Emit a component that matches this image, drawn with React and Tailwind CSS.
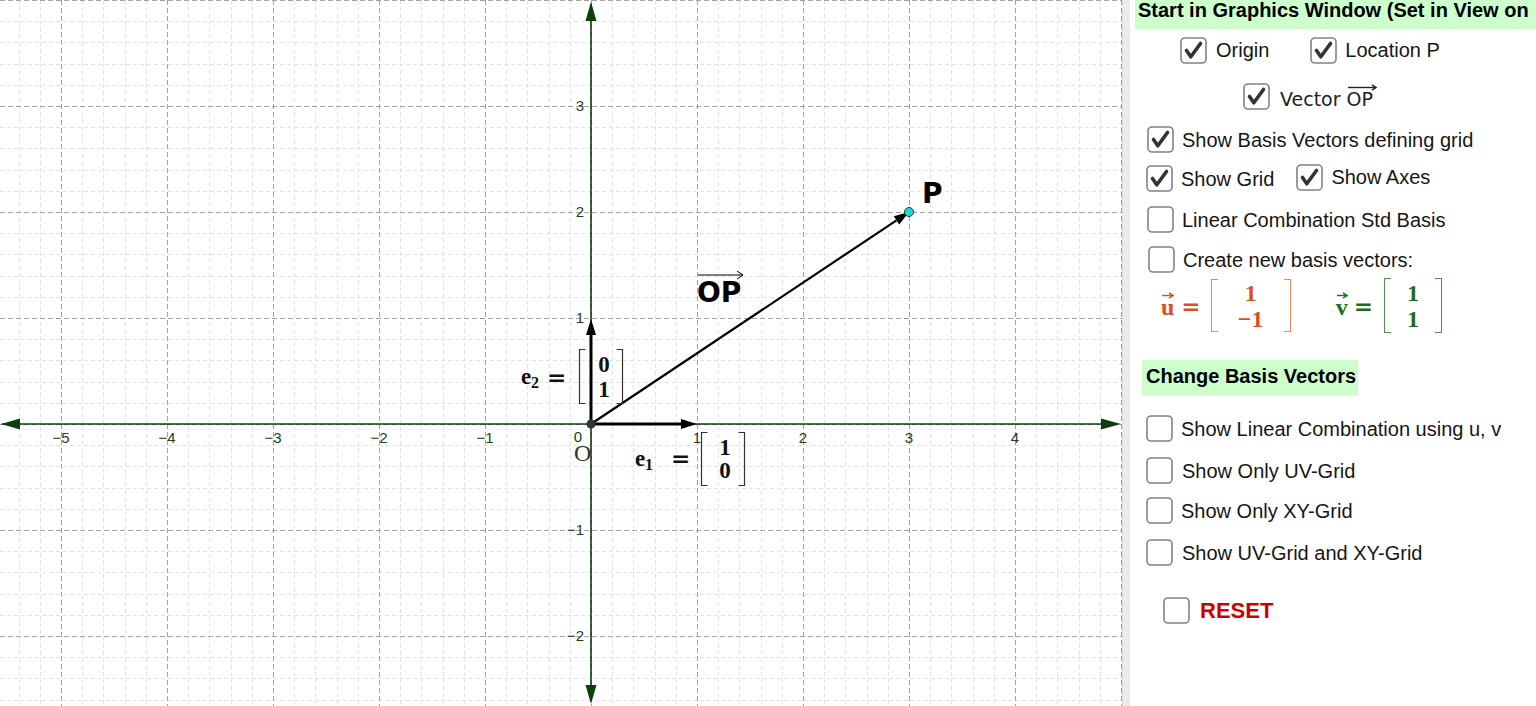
import React from "react";

const U = 106;
const OX = 591;
const OY = 424;
const W = 1122;
const H = 706;
const AXIS = "#0d3f0d";
const LBL = "#1c3f1c";
const SANS = "'Liberation Sans', Arial, sans-serif";
const SERIF = "'Liberation Serif', 'Times New Roman', serif";

function head(tx, ty, dx, dy, len, hw) {
  const l = Math.hypot(dx, dy);
  const ux = dx / l;
  const uy = dy / l;
  const bx = tx - ux * len;
  const by = ty - uy * len;
  const px = -uy;
  const py = ux;
  return {
    pts: `${tx},${ty} ${bx + px * hw},${by + py * hw} ${bx - px * hw},${by - py * hw}`,
    bx,
    by,
  };
}

function Graph() {
  const minorV = [];
  const majorV = [];
  for (let k = -27; k <= 25; k++) {
    const x = Math.round(OX + (k * U) / 5) + 0.5;
    if (k % 5 === 0) {
      majorV.push(<line key={"mv" + k} x1={x} y1={0} x2={x} y2={H} stroke="#a2a2a2" strokeWidth="1" strokeDasharray="5 3" />);
    } else {
      minorV.push(<line key={"nv" + k} x1={x} y1={0} x2={x} y2={H} stroke="#e2e2e2" strokeWidth="1" strokeDasharray="4 3" />);
    }
  }
  const minorH = [];
  const majorH = [];
  for (let k = -20; k <= 13; k++) {
    const y = Math.round(OY + (k * U) / 5) + 0.5;
    if (k % 5 === 0) {
      majorH.push(<line key={"mh" + k} x1={0} y1={y} x2={W} y2={y} stroke="#a2a2a2" strokeWidth="1" strokeDasharray="5 3" />);
    } else {
      minorH.push(<line key={"nh" + k} x1={0} y1={y} x2={W} y2={y} stroke="#e2e2e2" strokeWidth="1" strokeDasharray="4 3" />);
    }
  }
  const xl = [-5, -4, -3, -2, -1, 1, 2, 3, 4];
  const yl = [3, 2, 1, -1, -2];
  const fmt = (n) => (n < 0 ? "\u2212" + Math.abs(n) : String(n));

  const P = { x: OX + 3 * U, y: OY - 2 * U };
  const op = head(P.x, P.y, P.x - OX, P.y - OY, 15, 5);
  const e1 = head(OX + U, OY, 1, 0, 16, 5);
  const e2 = head(OX, OY - U + 1, 0, -1, 16, 5);

  return (
    <svg width={W} height={H} viewBox={`0 0 ${W} ${H}`} className="block shrink-0">
      <rect x="0" y="0" width={W} height={H} fill="#ffffff" />
      {minorV}
      {minorH}
      {majorV}
      {majorH}
      {/* axes */}
      <line x1={2} y1={OY} x2={1104} y2={OY} stroke={AXIS} strokeWidth="1.6" />
      <line x1={OX} y1={4} x2={OX} y2={700} stroke={AXIS} strokeWidth="1.6" />
      <polygon points={`1121,${OY} 1101,${OY - 5.5} 1101,${OY + 5.5}`} fill={AXIS} />
      <polygon points={`1,${OY} 20,${OY - 5.5} 20,${OY + 5.5}`} fill={AXIS} />
      <polygon points={`${OX},2 ${OX - 5.5},21 ${OX + 5.5},21`} fill={AXIS} />
      <polygon points={`${OX},704 ${OX - 5.5},685 ${OX + 5.5},685`} fill={AXIS} />
      {/* tick labels */}
      {xl.map((k) => (
        <text key={"xl" + k} x={OX + k * U} y={443} textAnchor="middle" fontSize="15" fill={LBL} fontFamily={SANS}>
          {fmt(k)}
        </text>
      ))}
      <text x={578} y={442} textAnchor="middle" fontSize="15" fill={LBL} fontFamily={SANS}>0</text>
      {yl.map((k) => (
        <text key={"yl" + k} x={584} y={OY - k * U + 5} textAnchor="end" fontSize="15" fill={LBL} fontFamily={SANS}>
          {fmt(k)}
        </text>
      ))}
      {/* vector OP */}
      <line x1={OX} y1={OY} x2={op.bx} y2={op.by} stroke="#000" strokeWidth="2.2" />
      <polygon points={op.pts} fill="#000" />
      {/* e1, e2 */}
      <line x1={OX} y1={OY} x2={e1.bx} y2={e1.by} stroke="#000" strokeWidth="3" />
      <polygon points={e1.pts} fill="#000" />
      <line x1={OX} y1={OY} x2={e2.bx} y2={e2.by} stroke="#000" strokeWidth="3" />
      <polygon points={e2.pts} fill="#000" />
      {/* points */}
      <circle cx={OX} cy={OY} r="4.5" fill="#333" />
      <circle cx={P.x} cy={P.y} r="4.5" fill="#19d9d9" stroke="#1a4040" strokeWidth="1" />
      {/* labels */}
      <text x={922} y={203} fontSize="28" fontWeight="bold" fill="#000" fontFamily="'DejaVu Sans', sans-serif">P</text>
      <text x={697} y={302} fontSize="28" fontWeight="bold" fill="#000" fontFamily="'DejaVu Sans', sans-serif">OP</text>
      <line x1={698} y1={275} x2={743} y2={275} stroke="#000" strokeWidth="1" />
      <polyline points="737,271 743,275 737,279" fill="none" stroke="#000" strokeWidth="1" />
      <text x={574} y={461} fontSize="24" fill="#333" fontFamily={SERIF}>O</text>
      {/* e2 = [0;1] */}
      <text x={521} y={384} fontSize="23" fontWeight="bold" fill="#111" fontFamily={SERIF}>e</text>
      <text x={531} y={388} fontSize="16" fontWeight="bold" fill="#111" fontFamily={SERIF}>2</text>
      <text x={547} y={385} fontSize="23" fontWeight="bold" fill="#111" fontFamily="'DejaVu Serif', serif">=</text>
      <polyline points="585.5,349.5 579.5,349.5 579.5,403.5 585.5,403.5" fill="none" stroke="#333" strokeWidth="1.2" />
      <text x={604} y={372} textAnchor="middle" fontSize="23" fontWeight="bold" fill="#111" fontFamily={SERIF}>0</text>
      <text x={604} y={397} textAnchor="middle" fontSize="23" fontWeight="bold" fill="#111" fontFamily={SERIF}>1</text>
      <polyline points="616.5,349.5 622.5,349.5 622.5,403.5 616.5,403.5" fill="none" stroke="#333" strokeWidth="1.2" />
      {/* e1 = [1;0] */}
      <text x={635} y={466} fontSize="23" fontWeight="bold" fill="#111" fontFamily={SERIF}>e</text>
      <text x={645} y={470} fontSize="16" fontWeight="bold" fill="#111" fontFamily={SERIF}>1</text>
      <text x={671} y={466} fontSize="23" fontWeight="bold" fill="#111" fontFamily="'DejaVu Serif', serif">=</text>
      <polyline points="707.5,432.5 701.5,432.5 701.5,485.5 707.5,485.5" fill="none" stroke="#333" strokeWidth="1.2" />
      <text x={725} y={455} textAnchor="middle" fontSize="23" fontWeight="bold" fill="#111" fontFamily={SERIF}>1</text>
      <text x={725} y={478} textAnchor="middle" fontSize="23" fontWeight="bold" fill="#111" fontFamily={SERIF}>0</text>
      <polyline points="738.5,432.5 744.5,432.5 744.5,485.5 738.5,485.5" fill="none" stroke="#333" strokeWidth="1.2" />
    </svg>
  );
}

function Box({ checked }) {
  return (
    <svg width="27" height="27" viewBox="0 0 27 27" className="shrink-0 block">
      <rect x="1" y="1" width="25" height="25" rx="4" fill="#fff" stroke="#828282" strokeWidth="1.6" />
      {checked && (
        <path d="M6.5 13.5 L10.8 19.8 L20.5 6.5" fill="none" stroke="#333" strokeWidth="3.6" strokeLinecap="round" strokeLinejoin="round" />
      )}
    </svg>
  );
}

function ArrowOver({ color, w }) {
  return (
    <svg width={w} height="7" viewBox={`0 0 ${w} 7`} className="absolute left-0 top-[0px]">
      <line x1="1" y1="3.5" x2={w - 1} y2="3.5" stroke={color} strokeWidth="1.4" />
      <polyline points={`${w - 5},0.8 ${w - 1},3.5 ${w - 5},6.2`} fill="none" stroke={color} strokeWidth="1.4" />
    </svg>
  );
}

export default function App() {
  return (
    <div className="flex w-[1536px] h-[706px] overflow-hidden bg-white">
      <Graph />
      <div className="w-[8px] shrink-0 bg-[#ebebeb] border-l border-[#dcdcdc]" />
      <div className="flex-1 flex flex-col overflow-hidden bg-white text-[20px] text-[#161616] font-['Liberation_Sans',Arial,sans-serif]">
        {/* header */}
        <div className="ml-[5px] h-[29px] shrink-0 bg-[#ccffcc] pl-[3px] font-bold leading-[20px] whitespace-nowrap text-black">
          Start in Graphics Window (Set in View on
        </div>
        {/* origin / location P */}
        <div className="mt-[7px] ml-[50px] h-[28px] flex items-center whitespace-nowrap leading-[23px]">
          <Box checked />
          <span className="ml-[9px]">Origin</span>
          <span className="ml-[41px]"><Box checked /></span>
          <span className="ml-[8px]">Location P</span>
        </div>
        {/* vector OP */}
        <div className="mt-[18px] ml-[113px] h-[28px] flex items-center whitespace-nowrap font-['DejaVu_Sans',sans-serif] text-[19px] text-[#222]">
          <Box checked />
          <span className="ml-[10px] pt-[5px] leading-[22px]">
            Vector{" "}
            <span className="relative inline-block pt-[4px] -mt-[4px]">
              OP
              <ArrowOver color="#222" w={30} />
            </span>
          </span>
        </div>
        {/* show basis vectors */}
        <div className="mt-[16px] ml-[17px] h-[27px] flex items-center whitespace-nowrap">
          <Box checked />
          <span className="ml-[8px]">Show Basis Vectors defining grid</span>
        </div>
        {/* show grid / axes */}
        <div className="mt-[12px] ml-[16px] h-[27px] flex items-center whitespace-nowrap">
          <Box checked />
          <span className="ml-[8px]">Show Grid</span>
          <span className="ml-[22px] -mt-[3px]"><Box checked /></span>
          <span className="ml-[8px] -mt-[3px]">Show Axes</span>
        </div>
        <div className="mt-[14px] ml-[17px] h-[27px] flex items-center whitespace-nowrap">
          <Box />
          <span className="ml-[8px]">Linear Combination Std Basis</span>
        </div>
        <div className="mt-[13px] ml-[18px] h-[27px] flex items-center whitespace-nowrap">
          <Box />
          <span className="ml-[8px]">Create new basis vectors:</span>
        </div>
        {/* u and v */}
        <div className="mt-[5px] ml-[31px] h-[55px] flex items-center whitespace-nowrap font-['Liberation_Serif',serif] font-bold text-[24px] leading-[24px]">
          <span className="relative text-[#dc4f1c] pt-[3px]">
            u
            <ArrowOver color="#dc4f1c" w={13} />
          </span>
          <span className="ml-[7px] text-[#dc4f1c] font-['DejaVu_Serif',serif] text-[23px]">=</span>
          <div className="ml-[10px] w-[7px] h-[53px] border-l-[1.5px] border-t-[1.5px] border-b-[1.5px] border-[#e8845e]" />
          <div className="w-[66px] flex flex-col items-center text-[#dc4f1c] leading-[26px]">
            <span>1</span>
            <span>{"\u2212"}1</span>
          </div>
          <div className="w-[7px] h-[53px] border-r-[1.5px] border-t-[1.5px] border-b-[1.5px] border-[#e8845e]" />
          <span className="relative ml-[45px] text-[#1b6e1b] pt-[3px]">
            v
            <ArrowOver color="#1b6e1b" w={12} />
          </span>
          <span className="ml-[6px] text-[#1b6e1b] font-['DejaVu_Serif',serif] text-[23px]">=</span>
          <div className="ml-[11px] w-[7px] h-[55px] border-l-[1.5px] border-t-[1.5px] border-b-[1.5px] border-[#4f8f4f]" />
          <div className="w-[44px] flex flex-col items-center text-[#1b6e1b] leading-[26px]">
            <span>1</span>
            <span>1</span>
          </div>
          <div className="w-[7px] h-[55px] border-r-[1.5px] border-t-[1.5px] border-b-[1.5px] border-[#4f8f4f]" />
        </div>
        {/* change basis header */}
        <div className="mt-[27px] ml-[12px] h-[36px] w-fit bg-[#ccffcc] pl-[4px] pr-[2px] pb-[4px] flex items-center font-bold whitespace-nowrap text-black">
          Change Basis Vectors
        </div>
        <div className="mt-[19px] ml-[16px] h-[27px] flex items-center whitespace-nowrap">
          <Box />
          <span className="ml-[8px]">Show Linear Combination using u, v</span>
        </div>
        <div className="mt-[15px] ml-[16px] h-[27px] flex items-center whitespace-nowrap">
          <Box />
          <span className="ml-[9px]">Show Only UV-Grid</span>
        </div>
        <div className="mt-[13px] ml-[16px] h-[27px] flex items-center whitespace-nowrap">
          <Box />
          <span className="ml-[8px]">Show Only XY-Grid</span>
        </div>
        <div className="mt-[15px] ml-[16px] h-[27px] flex items-center whitespace-nowrap">
          <Box />
          <span className="ml-[9px]">Show UV-Grid and XY-Grid</span>
        </div>
        <div className="mt-[31px] ml-[33px] h-[27px] flex items-center whitespace-nowrap">
          <Box />
          <span className="ml-[10px] text-[22px] font-bold text-[#cc0000]">RESET</span>
        </div>
      </div>
    </div>
  );
}
